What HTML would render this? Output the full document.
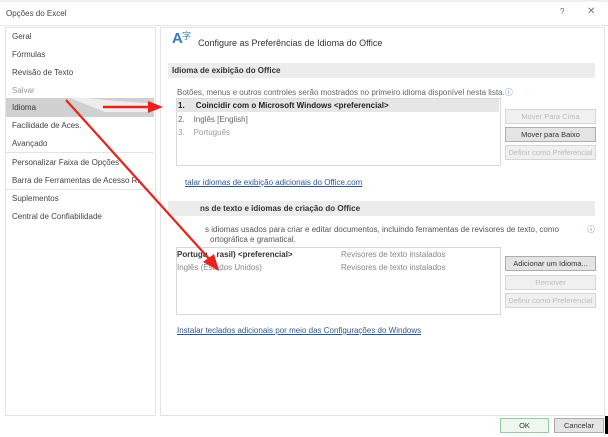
<!DOCTYPE html>
<html><head><meta charset="utf-8"><style>
body{margin:0;width:608px;height:437px;background:#fff;font-family:"Liberation Sans",sans-serif;font-size:8px;color:#444;position:relative;overflow:hidden}
.a{position:absolute;white-space:nowrap}
.panel{position:absolute;border:1px solid #e3e3e3;background:#fff}
.btn{position:absolute;border:1px solid #d6d6d6;background:#f0f0f0;color:#bbb;text-align:center;font-size:7.5px;line-height:13px}
.btn.on{background:#e4e4e4;border-color:#adadad;color:#333}
.hdr{position:absolute;background:#ececec;font-weight:bold;color:#333;font-size:8px;line-height:15px;height:15px;padding-left:4px}
.lk{color:#2b5797;text-decoration:underline}
</style></head><body>
<div class="a" style="left:0;top:0;width:608px;height:2px;background:#eee"></div>
<div class="a" style="left:6px;top:9px;color:#444">Opções do Excel</div>
<div class="a" style="left:560px;top:7px;color:#666">?</div>
<div class="a" style="left:587px;top:6px;color:#777;font-size:10px">✕</div>
<div class="a" style="left:0;top:25px;width:608px;height:1px;background:#e8e8e8"></div>
<div class="panel" style="left:5px;top:27px;width:149px;height:387px"></div>
<div class="panel" style="left:160px;top:27px;width:443px;height:387px"></div>
<div class="a" style="left:6px;top:98px;width:148px;height:19px;background:#d0d0d0"></div>
<div class="a" style="left:12px;top:32px">Geral</div>
<div class="a" style="left:12px;top:50px">Fórmulas</div>
<div class="a" style="left:12px;top:68px">Revisão de Texto</div>
<div class="a" style="left:12px;top:86px;color:#999">Salvar</div>
<div class="a" style="left:12px;top:103px;color:#333">Idioma</div>
<div class="a" style="left:12px;top:121px">Facilidade de Aces.</div>
<div class="a" style="left:12px;top:139px">Avançado</div>
<div class="a" style="left:6px;top:152px;width:147px;height:1px;background:#e3e3e3"></div>
<div class="a" style="left:12px;top:158px">Personalizar Faixa de Opções</div>
<div class="a" style="left:12px;top:176px">Barra de Ferramentas de Acesso R.</div>
<div class="a" style="left:6px;top:189px;width:147px;height:1px;background:#e3e3e3"></div>
<div class="a" style="left:12px;top:194px">Suplementos</div>
<div class="a" style="left:12px;top:212px">Central de Confiabilidade</div>

<div class="a" style="left:172px;top:30px;color:#3b78c4;font-size:15px;font-weight:bold">A</div>
<div class="a" style="left:182px;top:29px;color:#3b78c4;font-size:9px">字</div>
<div class="a" style="left:198px;top:38px;font-size:9px;color:#333">Configure as Preferências de Idioma do Office</div>

<div class="hdr" style="left:168px;top:63px;width:423px">Idioma de exibição do Office</div>
<div class="a" style="left:177px;top:87px;color:#666">Botões, menus e outros controles serão mostrados no primeiro idioma disponível nesta lista.<span style="color:#3b78c4">ⓘ</span></div>
<div class="a" style="left:176px;top:98px;width:323px;height:66px;border:1px solid #d8d8d8"></div>
<div class="a" style="left:177px;top:99px;width:322px;height:13px;background:#e6e6e6"></div>
<div class="a" style="left:178px;top:101px;font-weight:bold;color:#222">1.&nbsp;&nbsp;&nbsp;&nbsp;&nbsp;Coincidir com o Microsoft Windows &lt;preferencial&gt;</div>
<div class="a" style="left:178px;top:115px;color:#666">2.&nbsp;&nbsp;&nbsp;&nbsp;Inglês [English]</div>
<div class="a" style="left:178px;top:128px;color:#999">3.&nbsp;&nbsp;&nbsp;&nbsp;Português</div>
<div class="btn" style="left:505px;top:109px;width:89px">Mover Para Cima</div>
<div class="btn on" style="left:505px;top:127px;width:89px">Mover para Baixo</div>
<div class="btn" style="left:505px;top:145px;width:89px">Definir como Preferencial</div>
<div class="a lk" style="left:185px;top:178px">talar idiomas de exibição adicionais do Office.com</div>

<div class="hdr" style="left:168px;top:201px;width:423px"></div>
<div class="a" style="left:200px;top:204px;font-weight:bold;color:#333">ns de texto e idiomas de criação do Office</div>
<div class="a" style="left:205px;top:225px;color:#555">s idiomas usados para criar e editar documentos, incluindo ferramentas de revisores de texto, como</div>
<div class="a" style="left:210px;top:235px;color:#555">ortográfica e gramatical.</div>
<div class="a" style="left:587px;top:224px;color:#3b78c4">ⓘ</div>
<div class="a" style="left:176px;top:247px;width:323px;height:66px;border:1px solid #d8d8d8"></div>
<div class="a" style="left:177px;top:250px;font-weight:bold;color:#333">Portugu&nbsp;&nbsp;&nbsp;&nbsp;rasil) &lt;preferencial&gt;</div>
<div class="a" style="left:341px;top:250px;color:#888">Revisores de texto instalados</div>
<div class="a" style="left:177px;top:263px;color:#888">Inglês (Estados Unidos)</div>
<div class="a" style="left:341px;top:263px;color:#888">Revisores de texto instalados</div>
<div class="btn on" style="left:505px;top:256px;width:89px">Adicionar um Idioma...</div>
<div class="btn" style="left:505px;top:275px;width:89px">Remover</div>
<div class="btn" style="left:505px;top:293px;width:89px">Definir como Preferencial</div>
<div class="a lk" style="left:177px;top:326px">Instalar teclados adicionais por meio das Configurações do Windows</div>

<div class="btn on" style="left:500px;top:418px;width:47px;background:#eef6ef;border-color:#8fd19e;line-height:13px">OK</div>
<div class="btn on" style="left:554px;top:418px;width:48px">Cancelar</div>
<div class="a" style="left:605px;top:416px;width:3px;height:18px;background:#000"></div>

<svg class="a" style="left:0;top:0" width="608" height="437">
<polygon points="65,96 105,100 160,104 160,112 105,112" fill="#f4f4f4" opacity="0.8"/>
<line x1="103" y1="107" x2="150" y2="107" stroke="#e8231b" stroke-width="2.5"/>
<polygon points="148,101 163,107 148,113" fill="#e8231b"/>
<line x1="66" y1="100" x2="212" y2="262" stroke="#e8231b" stroke-width="2.2"/>
<polygon points="203,262 219,271 214,254" fill="#e8231b"/>
</svg>
</body></html>
